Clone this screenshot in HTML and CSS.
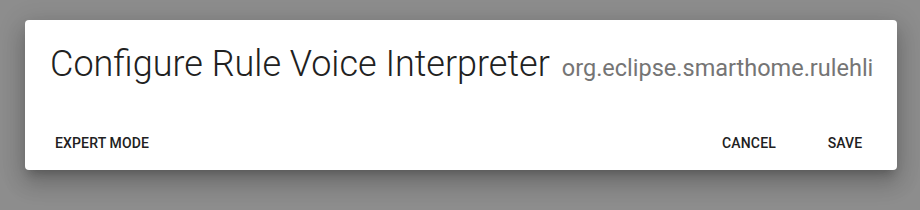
FILE: index.html
```html
<!DOCTYPE html>
<html>

<head>
    <meta charset="UTF-8">
    <title>Configure Rule Voice Interpreter</title>
    <link rel="stylesheet" href="styles.css">
</head>

<body>
    <div class="dialog">
        <div class="dialog-title">
            <span class="title">Configure Rule Voice Interpreter</span>
            <span class="subtitle">org.eclipse.smarthome.rulehli</span>
        </div>
        <div class="dialog-actions">
            <button class="btn expert">Expert mode</button>
            <div class="spacer"></div>
            <button class="btn">Cancel</button>
            <button class="btn">Save</button>
        </div>
    </div>
</body>

</html>
```

FILE: styles.css
```css
body {
    margin: 0;
    padding: 20px 23px 0 25px;
    background: #8d8d8d;
    font-family: Roboto, "Liberation Sans", sans-serif;
    height: 210px;
    box-sizing: border-box;
    overflow: hidden;
}

.dialog {
    background: #fff;
    border-radius: 4px;
    height: 150px;
    box-sizing: border-box;
    box-shadow: 0 7px 9px -4px rgba(0, 0, 0, 0.2), 0 14px 21px 2px rgba(0, 0, 0, 0.14), 0 5px 26px 4px rgba(0, 0, 0, 0.12);
    display: flex;
    flex-direction: column;
}

.dialog-title {
    padding: 23px 25px 0 25px;
    white-space: nowrap;
    overflow: hidden;
    height: 57px;
}

.title {
    font-size: 36px;
    font-weight: 300;
    color: #212121;
}

.subtitle {
    font-size: 23.5px;
    color: #757575;
    margin-left: 8px;
}

.dialog-actions {
    display: flex;
    align-items: center;
    margin-top: auto;
    padding: 0 0 9px 0;
}

.spacer {
    flex: 1;
}

.btn {
    font-family: Roboto, "Liberation Sans", sans-serif;
    font-size: 14px;
    font-weight: 500;
    letter-spacing: 0.01em;
    text-transform: uppercase;
    color: #212121;
    background: none;
    border: none;
    min-width: 88px;
    height: 36px;
    padding: 0 6px;
    margin: 0 8px 0 0;
    cursor: pointer;
}

.btn.expert {
    margin-left: 24px;
}
```
